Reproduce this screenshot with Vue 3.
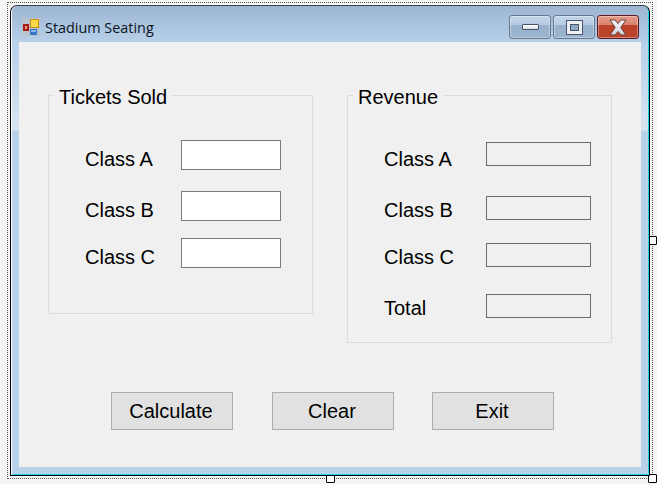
<script setup>
const ticketRows = [
  { label: 'Class A', tight: false },
  { label: 'Class B', tight: false },
  { label: 'Class C', tight: true }
]
const revenueRows = [
  { label: 'Class A', tight: false, first: true },
  { label: 'Class B', tight: false },
  { label: 'Class C', tight: true },
  { label: 'Total', tight: false }
]
const buttons = ['Calculate', 'Clear', 'Exit']
</script>

<template>
  <div class="designer">
    <div class="selection"></div>
    <span class="handle handle-right"></span>
    <span class="handle handle-bottom"></span>
    <span class="handle handle-corner"></span>

    <div class="window">
      <div class="titlebar">
        <svg class="app-icon" width="18" height="18" viewBox="0 0 18 18">
          <rect width="18" height="18" fill="#b9c3cd" />
          <rect x="1" y="6" width="6" height="7" fill="#a81a10" />
          <rect x="3" y="8" width="2" height="3" fill="#f0a090" />
          <rect x="8" y="1" width="9" height="9" fill="#c89410" />
          <rect x="9" y="2" width="7" height="7" fill="#fdd848" />
          <rect x="8" y="11" width="7" height="6" fill="#3a74c8" />
          <rect x="9" y="12" width="5" height="2" fill="#8ab8ee" />
        </svg>
        <span class="title">Stadium Seating</span>
        <div class="controls">
          <button class="ctl">
            <span class="min-glyph"></span>
          </button>
          <button class="ctl">
            <span class="max-glyph"></span>
          </button>
          <button class="ctl ctl-close">
            <svg width="20" height="17" viewBox="0 0 20 17">
              <defs>
                <linearGradient id="xfill" x1="0" y1="0" x2="0" y2="1">
                  <stop offset="0" stop-color="#f6f7f8" />
                  <stop offset="1" stop-color="#cfd3d8" />
                </linearGradient>
              </defs>
              <path d="M2 1 L7 1 L10 4.5 L13 1 L18 1 L12.8 8.5 L18 16 L13 16 L10 12.5 L7 16 L2 16 L7.2 8.5 Z" fill="url(#xfill)" stroke="#6b3b38" stroke-width="1" stroke-linejoin="round" />
            </svg>
          </button>
        </div>
      </div>

      <div class="client">
        <div class="groups">
          <section class="group group-tickets">
            <h3 class="group-title">Tickets Sold</h3>
            <div v-for="row in ticketRows" :key="row.label" class="row" :class="{ tight: row.tight }">
              <label>{{ row.label }}</label>
              <input class="ticket-input" type="text" />
            </div>
          </section>

          <section class="group group-revenue">
            <h3 class="group-title">Revenue</h3>
            <div v-for="row in revenueRows" :key="row.label" class="row" :class="{ tight: row.tight, first: row.first }">
              <label>{{ row.label }}</label>
              <div class="output"></div>
            </div>
          </section>
        </div>

        <div class="actions">
          <button v-for="b in buttons" :key="b" class="action">{{ b }}</button>
        </div>
      </div>
    </div>
  </div>
</template>

<style>
html, body {
  margin: 0;
  background: #f5f5f5;
}
</style>

<style scoped>
.designer {
  position: relative;
  width: 657px;
  height: 484px;
  overflow: hidden;
  background: #f5f5f5;
  font-family: "Liberation Sans", Arial, sans-serif;
  color: #000;
}
.selection {
  position: absolute;
  left: 7px;
  top: 2px;
  width: 644px;
  height: 475px;
  border: 1px dotted #555;
}
.handle {
  position: absolute;
  width: 7px;
  height: 7px;
  background: #fff;
  border: 1px solid #000;
  border-radius: 1px;
}
.handle-right { left: 648px; top: 236px; }
.handle-bottom { left: 326px; top: 474px; }
.handle-corner { left: 648px; top: 474px; }

.window {
  position: absolute;
  left: 10px;
  top: 5px;
  width: 638px;
  height: 469px;
  border: 1px solid #000;
  border-top-color: #3a4048;
  border-radius: 7px 7px 0 0;
  box-shadow: inset 1px 0 0 #fff, inset -1px -1px 0 #1ed6ea;
  background: linear-gradient(180deg, #9cb5d1 0px, #b7d0ea 36px, #c4d7ec 70px, #d8e5f1 124px, #b8d2ea 125px);
  display: flex;
  flex-direction: column;
}

.titlebar {
  height: 36px;
  display: flex;
  align-items: flex-start;
  flex: none;
}
.app-icon {
  margin: 12px 0 0 11px;
  flex: none;
}
.title {
  margin: 12px 0 0 5px;
  font-family: "Open Sans", sans-serif;
  font-size: 14.4px;
  line-height: 20px;
  color: #0b1420;
}
.controls {
  margin: 9px 0 0 auto;
  padding-right: 10px;
  display: flex;
  gap: 2px;
}
.ctl {
  width: 42px;
  height: 24px;
  padding: 0;
  box-sizing: border-box;
  display: flex;
  align-items: center;
  justify-content: center;
  border: 1px solid #66768f;
  border-radius: 3px;
  background: linear-gradient(180deg, #c2d6ea 0, #b6cbe2 42%, #98b1cc 43%, #9bb4cf 100%);
  box-shadow: inset 0 0 0 1px rgba(255, 255, 255, 0.35);
}
.ctl-close {
  border-color: #5e1a24;
  background: linear-gradient(180deg, #e59a88 0, #d9826f 42%, #bb4128 43%, #bb442c 100%);
}
.min-glyph {
  width: 15px;
  height: 4px;
  border: 1px solid #4a5468;
  border-radius: 1px;
  background: linear-gradient(180deg, #fff, #d8dce2);
}
.max-glyph {
  width: 9px;
  height: 7px;
  border: 3px solid #eef0f3;
  outline: 1px solid #4a5468;
  box-shadow: inset 0 0 0 1px #4a5468;
  background: #8fa8c4;
}

.client {
  width: 622px;
  height: 425px;
  margin: 0 auto 0 8px;
  padding: 53px 0 0 29px;
  box-sizing: border-box;
  background: #f0f0f0;
}
.groups {
  display: flex;
  align-items: flex-start;
  gap: 34px;
}
.group {
  position: relative;
  width: 265px;
  box-sizing: border-box;
  border: 1px solid #dcdcdc;
  padding: 24px 0 0 36px;
}
.group-tickets { height: 219px; }
.group-revenue { height: 248px; }
.group-title {
  position: absolute;
  left: 5px;
  top: -11px;
  margin: 0;
  padding: 0 5px;
  background: #f0f0f0;
  font-size: 20px;
  line-height: 24px;
  font-weight: 400;
}
.row {
  display: flex;
  align-items: flex-start;
  height: 24px;
  margin-top: 27px;
  font-size: 20px;
  line-height: 24px;
}
.row.tight { margin-top: 23px; }
.row label { flex: none; }
.group-tickets .row label { width: 96px; }
.group-revenue .row label { width: 102px; }
.ticket-input {
  width: 100px;
  height: 30px;
  margin: -7px 0 0;
  padding: 0;
  box-sizing: border-box;
  border: 1px solid #7a7a7a;
  background: #fff;
  outline: none;
}
.output {
  width: 105px;
  height: 24px;
  margin-top: -2px;
  box-sizing: border-box;
  border: 1px solid #696969;
  background: #f0f0f0;
}
.row.first .output { margin-top: -5px; }

.actions {
  display: flex;
  gap: 39px;
  margin: 49px 0 0 63px;
}
.action {
  width: 122px;
  height: 38px;
  padding: 0 2px 0 0;
  box-sizing: border-box;
  border: 1px solid #adadad;
  background: #e1e1e1;
  font-family: inherit;
  font-size: 20px;
  color: #000;
}
.action:last-child { margin-left: -1px; }
</style>
